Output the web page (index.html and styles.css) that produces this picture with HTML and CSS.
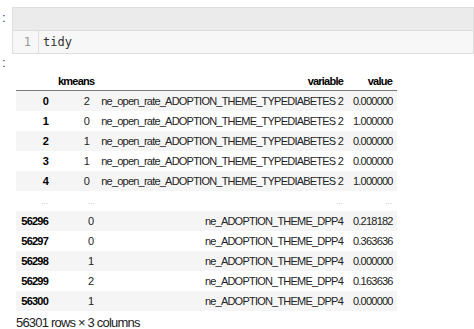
FILE: index.html
```html
<!DOCTYPE html>
<html>

<head>
    <title>tidy</title>
    <link rel="stylesheet" href="styles.css">
</head>

<body>
    <div class="cell">
        <div class="prompt">:</div>
        <div class="input-box">
            <div class="toolbar"></div>
            <div class="code-line">
                <span class="gutter">1</span>
                <span class="code">tidy</span>
            </div>
        </div>
    </div>

    <div class="cell output">
        <div class="prompt">:</div>
        <div class="output-area">
            <table class="dataframe">
                <colgroup>
                    <col class="col-index">
                    <col class="col-kmeans">
                    <col class="col-variable">
                    <col class="col-value">
                </colgroup>
                <thead>
                    <tr>
                        <th></th>
                        <th>kmeans</th>
                        <th>variable</th>
                        <th>value</th>
                    </tr>
                </thead>
                <tbody>
                    <tr><th>0</th><td>2</td><td>ne_open_rate_ADOPTION_THEME_TYPEDIABETES 2</td><td>0.000000</td></tr>
                    <tr><th>1</th><td>0</td><td>ne_open_rate_ADOPTION_THEME_TYPEDIABETES 2</td><td>1.000000</td></tr>
                    <tr><th>2</th><td>1</td><td>ne_open_rate_ADOPTION_THEME_TYPEDIABETES 2</td><td>0.000000</td></tr>
                    <tr><th>3</th><td>1</td><td>ne_open_rate_ADOPTION_THEME_TYPEDIABETES 2</td><td>0.000000</td></tr>
                    <tr><th>4</th><td>0</td><td>ne_open_rate_ADOPTION_THEME_TYPEDIABETES 2</td><td>1.000000</td></tr>
                    <tr class="dots"><th>...</th><td class="left">...</td><td>...</td><td>...</td></tr>
                    <tr><th>56296</th><td class="left">0</td><td>ne_ADOPTION_THEME_DPP4</td><td>0.218182</td></tr>
                    <tr><th>56297</th><td class="left">0</td><td>ne_ADOPTION_THEME_DPP4</td><td>0.363636</td></tr>
                    <tr><th>56298</th><td class="left">1</td><td>ne_ADOPTION_THEME_DPP4</td><td>0.000000</td></tr>
                    <tr><th>56299</th><td class="left">2</td><td>ne_ADOPTION_THEME_DPP4</td><td>0.163636</td></tr>
                    <tr><th>56300</th><td class="left">1</td><td>ne_ADOPTION_THEME_DPP4</td><td>0.000000</td></tr>
                </tbody>
            </table>
            <p class="shape">56301 rows × 3 columns</p>
        </div>
    </div>
</body>

</html>
```

FILE: styles.css
```css
body {
    margin: 0;
    background-color: #fff;
    font-family: "Liberation Sans", Arial, sans-serif;
    color: #000;
}

.cell {
    display: flex;
    padding-top: 7px;
}

.prompt {
    width: 12px;
    flex-shrink: 0;
    font-size: 13px;
    line-height: 22px;
    color: #303f9f;
    padding-left: 2px;
    box-sizing: border-box;
}

.input-box {
    flex: 1;
    border: 1px solid #dedede;
    background-color: #f7f7f7;
}

.toolbar {
    height: 22px;
    background-color: #ebebeb;
    border-bottom: 1px solid #dcdcdc;
}

.code-line {
    display: flex;
    height: 22px;
    align-items: center;
    font-family: "DejaVu Sans Mono", "Liberation Mono", monospace;
    font-size: 12px;
}

.gutter {
    width: 26px;
    height: 100%;
    border-right: 1px solid #dcdcdc;
    color: #999;
    text-align: right;
    padding-right: 7px;
    box-sizing: border-box;
    line-height: 22px;
}

.code {
    padding-left: 4px;
    color: #333;
}

.output {
    padding-top: 2px;
}

.output .prompt {
    line-height: 14px;
}

.output-area {
    padding-left: 4px;
    padding-top: 7px;
}

.dataframe {
    border-collapse: collapse;
    table-layout: fixed;
    width: 381px;
    font-size: 11px;
    letter-spacing: -0.78px;
    color: #222;
}

.dataframe th,
.dataframe td {
    height: 20px;
    padding: 0 5px;
    text-align: right;
    white-space: nowrap;
}

.dataframe th {
    font-weight: bold;
    color: #000;
}

.dataframe thead th {
    height: 24px;
    padding-bottom: 3px;
    border-bottom: 1px solid #777;
    vertical-align: bottom;
}

.dataframe tbody tr:nth-child(odd) {
    background-color: #f5f5f5;
}

.col-index {
    width: 37px;
}

.col-kmeans {
    width: 41px;
}

.col-variable {
    width: 254px;
}

.col-value {
    width: 49px;
}

.dataframe td.left {
    text-align: left;
    padding-left: 35px;
    padding-right: 0;
}

.dots th,
.dots td {
    color: #aaa;
    font-weight: normal;
    font-size: 8px;
    letter-spacing: 0;
}

.shape {
    margin: 4px 0 0 0;
    font-size: 13px;
    letter-spacing: -0.8px;
    color: #222;
}
```
